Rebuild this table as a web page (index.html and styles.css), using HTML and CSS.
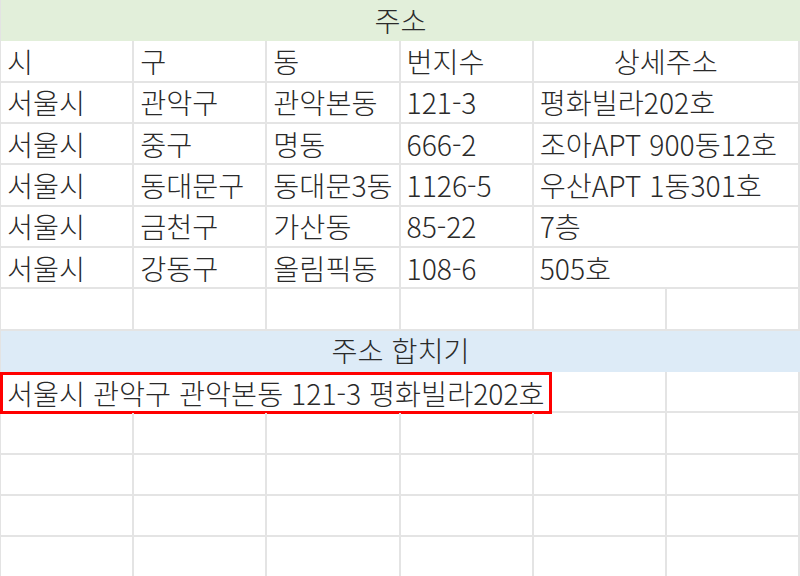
FILE: index.html
```html
<!DOCTYPE html>
<html lang="ko">
<head>
<meta charset="utf-8">
<title>주소 합치기</title>
<link rel="stylesheet" href="styles.css">
</head>
<body>
<div class="sheet">
  <div class="c title green span6">주소</div>

  <div class="c">시</div>
  <div class="c">구</div>
  <div class="c">동</div>
  <div class="c">번지수</div>
  <div class="c center span2">상세주소</div>

  <div class="c">서울시</div><div class="c">관악구</div><div class="c">관악본동</div><div class="c">121-3</div><div class="c span2">평화빌라202호</div>
  <div class="c">서울시</div><div class="c">중구</div><div class="c">명동</div><div class="c">666-2</div><div class="c span2">조아APT 900동12호</div>
  <div class="c">서울시</div><div class="c">동대문구</div><div class="c">동대문3동</div><div class="c">1126-5</div><div class="c span2">우산APT 1동301호</div>
  <div class="c">서울시</div><div class="c">금천구</div><div class="c">가산동</div><div class="c">85-22</div><div class="c span2">7층</div>
  <div class="c">서울시</div><div class="c">강동구</div><div class="c">올림픽동</div><div class="c">108-6</div><div class="c span2">505호</div>

  <div class="c"></div><div class="c"></div><div class="c"></div><div class="c"></div><div class="c"></div><div class="c"></div>

  <div class="c title blue span6">주소 합치기</div>

  <div class="c result span5"><span class="mark">서울시 관악구 관악본동 121-3 평화빌라202호</span></div>
  <div class="c"></div>

  <div class="c"></div><div class="c"></div><div class="c"></div><div class="c"></div><div class="c"></div><div class="c"></div>
  <div class="c"></div><div class="c"></div><div class="c"></div><div class="c"></div><div class="c"></div><div class="c"></div>
  <div class="c"></div><div class="c"></div><div class="c"></div><div class="c"></div><div class="c"></div><div class="c"></div>
  <div class="c"></div><div class="c"></div><div class="c"></div><div class="c"></div><div class="c"></div><div class="c"></div>
</div>
</body>
</html>
```

FILE: styles.css
```css
html, body {
  margin: 0;
  padding: 0;
  background: #ffffff;
  overflow: hidden;
}

.sheet {
  width: 800px;
  height: 576px;
  display: grid;
  grid-template-columns: repeat(6, 1fr);
  grid-auto-rows: 41.35px;
  border-left: 1px solid #e3e3e3;
  box-sizing: border-box;
  font-family: "Noto Sans CJK KR", "Noto Sans", sans-serif;
  font-size: 28.3px;
  font-weight: 300;
  color: #2a2a2a;
}

.c {
  box-sizing: border-box;
  border-right: 2px solid #e4e4e4;
  border-bottom: 2px solid #e4e4e4;
  display: flex;
  align-items: center;
  padding-left: 6px;
  white-space: nowrap;
  overflow: visible;
  line-height: 1;
}

.span2 { grid-column: span 2; }
.span5 { grid-column: span 5; }
.span6 { grid-column: span 6; }

.center { justify-content: center; padding-left: 0; }

.title {
  justify-content: center;
  padding-left: 0;
  border-right: none;
}

.green {
  background: #e2efda;
  border-bottom-color: #e2efda;
}

.blue {
  background: #ddebf7;
  border-bottom-color: #ddebf7;
}

.result {
  padding-left: 0;
  align-items: flex-start;
}

.mark {
  display: flex;
  align-items: center;
  border: 3px solid #ff0000;
  padding: 0 4px 0 4px;
  margin-left: -1px;
  box-sizing: border-box;
  height: 42px;
  background: #ffffff;
}
```
